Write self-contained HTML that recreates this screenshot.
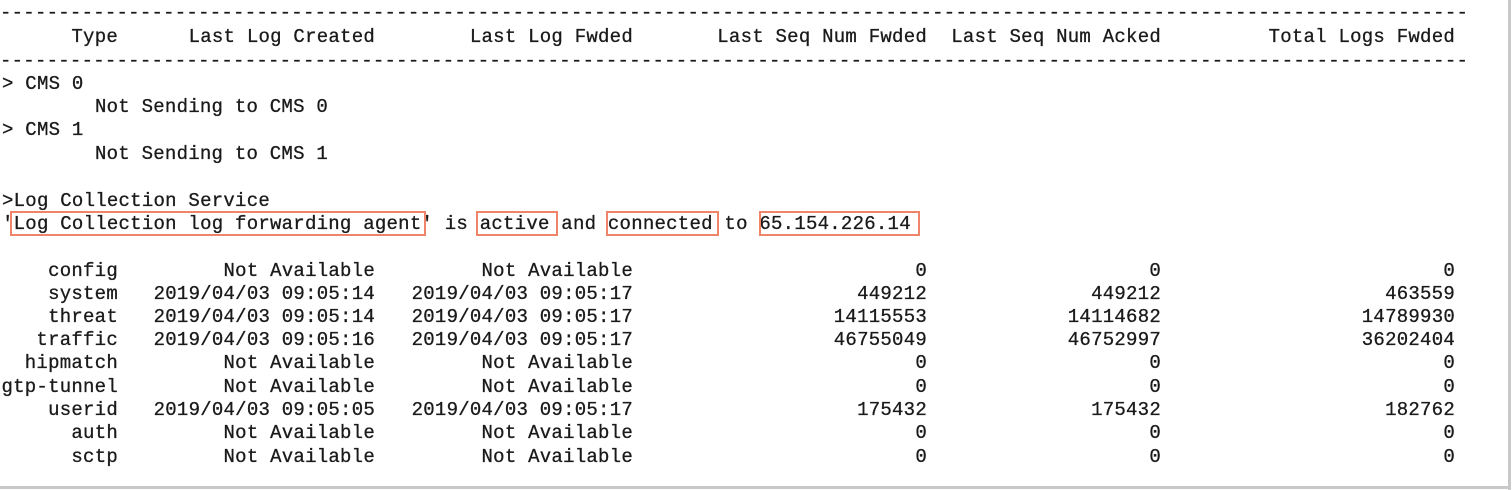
<!DOCTYPE html>
<html><head><meta charset="utf-8"><style>
html,body{margin:0;padding:0;background:#fff;}
body{width:1512px;height:490px;position:relative;overflow:hidden;font-family:"Liberation Mono","DejaVu Sans Mono",monospace;font-size:19px;letter-spacing:0.25px;color:#1a1a1a;-webkit-text-stroke:0.3px #1a1a1a;}
.r{position:absolute;height:24px;line-height:24px;white-space:pre;margin-top:1px;}
.a{position:absolute;height:24px;line-height:24px;white-space:pre;text-align:right;margin-top:1px;}
.box{position:absolute;border:2px solid #ef8468;box-sizing:border-box;}
.bd{position:absolute;background:#c8c8c8;}
</style></head><body>
<div class="bd" style="left:1508px;top:0;width:3px;height:490px"></div>
<div class="bd" style="left:0;top:486px;width:1511px;height:3px"></div>

<div class="r" style="left:0;top:0;width:1466px;overflow:hidden">------------------------------------------------------------------------------------------------------------------------------------</div>
<div class="r" style="left:0;top:48px;width:1466px;overflow:hidden">------------------------------------------------------------------------------------------------------------------------------------</div>

<div class="a" style="right:1394px;top:24px">Type</div>
<div class="a" style="right:1137px;top:24px">Last Log Created</div>
<div class="a" style="right:879px;top:24px">Last Log Fwded</div>
<div class="a" style="right:585px;top:24px">Last Seq Num Fwded</div>
<div class="a" style="right:351px;top:24px">Last Seq Num Acked</div>
<div class="a" style="right:57px;top:24px">Total Logs Fwded</div>

<div class="r" style="left:2px;top:71px">&gt; CMS 0</div>
<div class="r" style="left:95px;top:94px">Not Sending to CMS 0</div>
<div class="r" style="left:2px;top:117px">&gt; CMS 1</div>
<div class="r" style="left:95px;top:141px">Not Sending to CMS 1</div>
<div class="r" style="left:2px;top:188px">&gt;Log Collection Service</div>
<div class="r" style="left:2px;top:211px">'Log Collection log forwarding agent' is active and connected to 65.154.226.14</div>
<div class="box" style="left:10px;top:211px;width:416px;height:25px"></div>
<div class="box" style="left:476px;top:211px;width:82px;height:25px"></div>
<div class="box" style="left:606px;top:211px;width:113px;height:25px"></div>
<div class="box" style="left:759px;top:211px;width:161px;height:25px"></div>

<div class="a" style="right:1394px;top:258px">config</div><div class="a" style="right:1137px;top:258px">Not Available</div><div class="a" style="right:879px;top:258px">Not Available</div><div class="a" style="right:585px;top:258px">0</div><div class="a" style="right:351px;top:258px">0</div><div class="a" style="right:57px;top:258px">0</div>
<div class="a" style="right:1394px;top:281px">system</div><div class="a" style="right:1137px;top:281px">2019/04/03 09:05:14</div><div class="a" style="right:879px;top:281px">2019/04/03 09:05:17</div><div class="a" style="right:585px;top:281px">449212</div><div class="a" style="right:351px;top:281px">449212</div><div class="a" style="right:57px;top:281px">463559</div>
<div class="a" style="right:1394px;top:304px">threat</div><div class="a" style="right:1137px;top:304px">2019/04/03 09:05:14</div><div class="a" style="right:879px;top:304px">2019/04/03 09:05:17</div><div class="a" style="right:585px;top:304px">14115553</div><div class="a" style="right:351px;top:304px">14114682</div><div class="a" style="right:57px;top:304px">14789930</div>
<div class="a" style="right:1394px;top:327px">traffic</div><div class="a" style="right:1137px;top:327px">2019/04/03 09:05:16</div><div class="a" style="right:879px;top:327px">2019/04/03 09:05:17</div><div class="a" style="right:585px;top:327px">46755049</div><div class="a" style="right:351px;top:327px">46752997</div><div class="a" style="right:57px;top:327px">36202404</div>
<div class="a" style="right:1394px;top:350px">hipmatch</div><div class="a" style="right:1137px;top:350px">Not Available</div><div class="a" style="right:879px;top:350px">Not Available</div><div class="a" style="right:585px;top:350px">0</div><div class="a" style="right:351px;top:350px">0</div><div class="a" style="right:57px;top:350px">0</div>
<div class="a" style="right:1394px;top:374px">gtp-tunnel</div><div class="a" style="right:1137px;top:374px">Not Available</div><div class="a" style="right:879px;top:374px">Not Available</div><div class="a" style="right:585px;top:374px">0</div><div class="a" style="right:351px;top:374px">0</div><div class="a" style="right:57px;top:374px">0</div>
<div class="a" style="right:1394px;top:397px">userid</div><div class="a" style="right:1137px;top:397px">2019/04/03 09:05:05</div><div class="a" style="right:879px;top:397px">2019/04/03 09:05:17</div><div class="a" style="right:585px;top:397px">175432</div><div class="a" style="right:351px;top:397px">175432</div><div class="a" style="right:57px;top:397px">182762</div>
<div class="a" style="right:1394px;top:420px">auth</div><div class="a" style="right:1137px;top:420px">Not Available</div><div class="a" style="right:879px;top:420px">Not Available</div><div class="a" style="right:585px;top:420px">0</div><div class="a" style="right:351px;top:420px">0</div><div class="a" style="right:57px;top:420px">0</div>
<div class="a" style="right:1394px;top:444px">sctp</div><div class="a" style="right:1137px;top:444px">Not Available</div><div class="a" style="right:879px;top:444px">Not Available</div><div class="a" style="right:585px;top:444px">0</div><div class="a" style="right:351px;top:444px">0</div><div class="a" style="right:57px;top:444px">0</div>
</body></html>
